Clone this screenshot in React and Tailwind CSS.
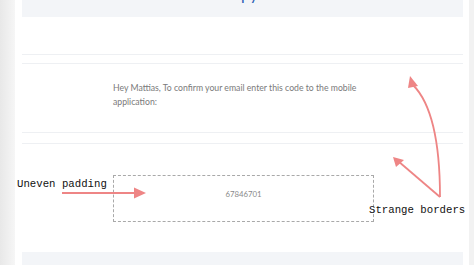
import React from 'react'

function Annotations() {
    return (
        <svg
            className="absolute inset-0"
            width="474"
            height="265"
            viewBox="0 0 474 265"
        >
            <g stroke="#ee8585" strokeWidth="1.8" fill="none">
                <line x1="62" y1="193" x2="137" y2="193" />
                <line x1="440" y1="197" x2="398" y2="161" />
                <path d="M440 197 Q440 112 413 85" />
            </g>
            <g fill="#ee8585">
                <polygon points="134,187.5 146,193 134,198.5" />
                <polygon points="393,157 404,160 396,167" />
                <polygon points="410,76 418,86 408,88" />
            </g>
        </svg>
    )
}

export default function App() {
    return (
        <div
            className="relative w-[474px] h-[265px] overflow-hidden flex bg-white"
            style={{ fontFamily: 'Lato, "Open Sans", sans-serif' }}
        >
            <div className="w-[15px] h-full bg-gradient-to-r from-[#e8e8e8] to-[#f6f6f6]" />
            <div className="flex-1 pl-[7px] pr-[6px] bg-white">
                <div className="flex flex-col h-full">
                    <div className="h-[17px] bg-[#f3f5f8] relative overflow-hidden">
                        <div className="absolute left-[219px] top-[-14px] text-[16px] leading-[16px] text-[#2d5fb5]">
                            py
                        </div>
                    </div>
                    <div className="mt-[37px] h-px bg-[#eef0f3]" />
                    <div className="mt-[8px] h-px bg-[#eef0f3]" />
                    <p className="pt-[17px] pl-[91px] w-[345px] text-[8.7px] leading-[14px] text-[#7a7a7a]">
                        Hey Mattias, To confirm your email enter this code to the mobile application:
                    </p>
                    <div className="mt-[23px] h-px bg-[#eef0f3]" />
                    <div className="mt-[10px] h-px bg-[#eef0f3]" />
                    <div className="mt-[31px] ml-[91px] w-[261px] h-[47px] border border-dashed border-[#a9a9a9] pt-[12px] text-center text-[7.8px] leading-[12px] text-[#8a8a8a]">
                        67846701
                    </div>
                    <div className="mt-[30px] flex-1 bg-[#f3f5f8]" />
                </div>
            </div>
            <div className="w-[5px] h-full bg-[#f2f2f2]" />

            <div className="absolute left-[17px] top-[177px] text-[10.7px] leading-[14px] text-[#111] font-['Liberation_Mono',monospace]">
                Uneven padding
            </div>
            <div className="absolute left-[369px] top-[203px] text-[10.7px] leading-[14px] text-[#111] font-['Liberation_Mono',monospace]">
                Strange borders
            </div>
            <Annotations />
        </div>
    )
}
